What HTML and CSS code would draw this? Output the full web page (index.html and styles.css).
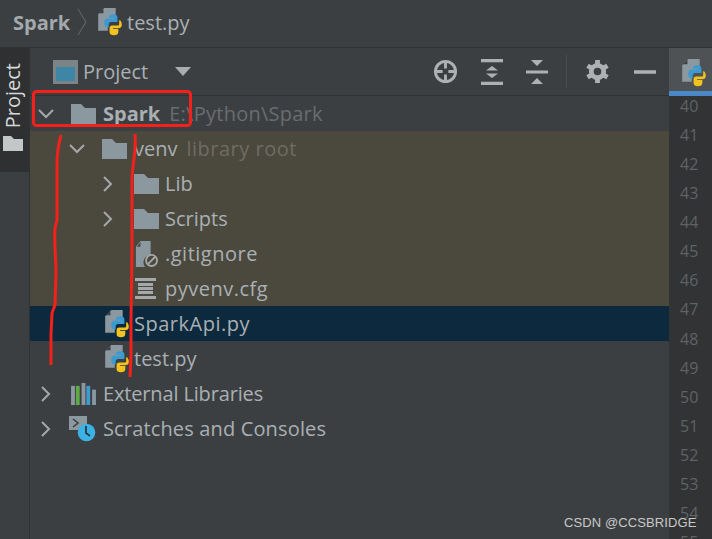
FILE: index.html
```html
<!DOCTYPE html>
<html lang="en">
<head>
<meta charset="utf-8">
<title>Spark</title>
<link rel="stylesheet" href="styles.css">
</head>
<body>
<svg width="0" height="0" class="defs">
  <defs>
    <symbol id="folder" viewBox="0 0 25 20"><path d="M0 0h10l4 4h11v16H0z" fill="#8c989f"/></symbol>
    <symbol id="chev-d" viewBox="0 0 16 16"><path d="M1 4l7 7 7-7" fill="none" stroke="#a4a8aa" stroke-width="2"/></symbol>
    <symbol id="chev-r" viewBox="0 0 16 16"><path d="M4 1l7 7-7 7" fill="none" stroke="#a4a8aa" stroke-width="2"/></symbol>
    <symbol id="py" viewBox="0 0 27 32">
      <path d="M7 0h13v13H11v13H0V7z" fill="#8c989f"/>
      <path d="M6 1v5H1z" fill="#3c3f41"/>
      <path d="M12 11c0-3 2-4 5-4s5 1 5 4v5h-7c-2 0-3 1-3 3v3h-2c-2 0-3-2-3-5s1-5 4-5h7v-1h-6z" fill="#3c9ad0"/>
      <path d="M24 14h1c1 1 2 3 2 5 0 3-2 4-4 4h-6v1h6v3c0 3-2 4-5 4s-5-1-5-4v-4c0-2 1-3 3-3h6c2 0 2-1 2-3z" fill="#f2c21f"/>
    </symbol>
  </defs>
</svg>
<div class="app">
  <header class="crumbs">
    <span class="crumb-root">Spark</span>
    <svg class="crumb-sep" width="10" height="28" viewBox="0 0 10 28"><path d="M1 1l8 13-8 13" fill="none" stroke="#5d6163" stroke-width="1.2"/></svg>
    <svg class="icon-py" width="24" height="28"><use href="#py"/></svg>
    <span class="crumb-file">test.py</span>
  </header>
  <div class="main">
    <aside class="stripe">
      <div class="stripe-tab">
        <span class="stripe-label">Project</span>
        <svg class="stripe-icon" width="20" height="15" viewBox="0 0 20 15"><path d="M0 0h8l3 3h9v12H0z" fill="#c4c7c8"/></svg>
      </div>
    </aside>
    <section class="panel">
      <div class="toolbar">
        <svg class="view-icon" width="25" height="24" viewBox="0 0 25 24"><rect x="0" y="0" width="25" height="24" fill="#7d8488"/><rect x="3" y="7" width="19" height="14" fill="#3e86a5"/></svg>
        <span class="view-name">Project</span>
        <svg class="view-caret" width="16" height="9" viewBox="0 0 16 9"><path d="M0 0h16L8 9z" fill="#a9adaf"/></svg>
        <div class="tools">
          <svg class="tool" width="25" height="25" viewBox="0 0 26 26"><circle cx="13" cy="13" r="10.5" fill="none" stroke="#aeb1b3" stroke-width="3"/><path d="M13 3v7M13 16v7M3 13h7M16 13h7" stroke="#aeb1b3" stroke-width="3"/></svg>
          <svg class="tool" width="22" height="26" viewBox="0 0 22 26"><path d="M0 1.500h22M0 24.500h22" stroke="#aeb1b3" stroke-width="3.500"/><path d="M11 7l6 4.500H5zM11 19l-6-4.500h12z" fill="#aeb1b3"/></svg>
          <svg class="tool" width="22" height="26" viewBox="0 0 22 26"><path d="M0 13h22" stroke="#aeb1b3" stroke-width="3"/><path d="M5 1h12l-6 6zM5 25h12l-6-6z" fill="#aeb1b3"/></svg>
          <span class="tool-sep"></span>
          <svg class="tool gear" width="23" height="23" viewBox="0 0 24 24"><circle cx="12" cy="12" r="6.500" fill="none" stroke="#aeb1b3" stroke-width="5"/><path d="M12 0v5M12 19v5M1.600 6l4.300 2.500M18.100 15.500l4.300 2.500M1.600 18l4.300-2.500M18.100 8.500l4.300-2.500" stroke="#aeb1b3" stroke-width="5"/></svg>
          <svg class="tool minus" width="22" height="4" viewBox="0 0 22 4"><path d="M0 2h22" stroke="#aeb1b3" stroke-width="3.500"/></svg>
        </div>
      </div>
      <ul class="tree">
        <li class="row">
          <svg class="chev" width="16" height="16"><use href="#chev-d"/></svg>
          <svg class="ic-folder" width="25" height="20"><use href="#folder"/></svg>
          <span class="name strong">Spark</span><span class="hint slight-wide">E:\Python\Spark</span>
        </li>
        <li class="row lib l1">
          <svg class="chev" width="16" height="16"><use href="#chev-d"/></svg>
          <svg class="ic-folder" width="25" height="20"><use href="#folder"/></svg>
          <span class="name">venv</span><span class="hint wide">library root</span>
        </li>
        <li class="row lib l2">
          <svg class="chev" width="16" height="16"><use href="#chev-r"/></svg>
          <svg class="ic-folder" width="25" height="20"><use href="#folder"/></svg>
          <span class="name">Lib</span>
        </li>
        <li class="row lib l2">
          <svg class="chev" width="16" height="16"><use href="#chev-r"/></svg>
          <svg class="ic-folder" width="25" height="20"><use href="#folder"/></svg>
          <span class="name">Scripts</span>
        </li>
        <li class="row lib l3">
          <svg class="ic-file" width="23" height="26" viewBox="0 0 25 28"><path d="M6 0h11v15a8 8 0 0 0-6 13H1V6z" fill="#8c989f"/><path d="M6 1v5H2z" fill="#4b483e"/><circle cx="18" cy="21" r="6" fill="none" stroke="#a4a8aa" stroke-width="2"/><path d="M14 25l8-8" stroke="#a4a8aa" stroke-width="2"/></svg>
          <span class="name wide">.gitignore</span>
        </li>
        <li class="row lib l3">
          <svg class="ic-file" width="23" height="21" viewBox="0 0 23 21"><path d="M0 1.500h21M3 6.500h15M3 10.500h15M3 14.500h15M0 19.500h21" stroke="#a4a8aa" stroke-width="3"/></svg>
          <span class="name wide">pyvenv.cfg</span>
        </li>
        <li class="row selected l4">
          <svg class="icon-py" width="24" height="28"><use href="#py"/></svg>
          <span class="name wide">SparkApi.py</span>
        </li>
        <li class="row l4">
          <svg class="icon-py" width="24" height="28"><use href="#py"/></svg>
          <span class="name">test.py</span>
        </li>
        <li class="row">
          <svg class="chev" width="16" height="16"><use href="#chev-r"/></svg>
          <svg class="ic-libs" width="25" height="22" viewBox="0 0 26 23"><rect x="0" y="3" width="4" height="20" fill="#8c989f"/><rect x="5" y="3" width="4" height="20" fill="#5cab44"/><rect x="11" y="0" width="4" height="23" fill="#8c989f"/><rect x="16" y="3" width="4" height="20" fill="#3e9bcf"/><rect x="22" y="7" width="4" height="16" fill="#8c989f"/></svg>
          <span class="name narrow">External Libraries</span>
        </li>
        <li class="row">
          <svg class="chev" width="16" height="16"><use href="#chev-r"/></svg>
          <svg class="ic-libs scratch" width="27" height="27" viewBox="0 0 27 27"><path d="M0 1h18v14H0z" fill="#8c989f"/><path d="M4 4l5 4-5 4" fill="none" stroke="#3c3f41" stroke-width="1.600"/><circle cx="17.500" cy="17.500" r="8.800" fill="#3bb2e6"/><path d="M17 11v7l4 3" fill="none" stroke="#2b3a42" stroke-width="1.800"/></svg>
          <span class="name slight">Scratches and Consoles</span>
        </li>
      </ul>
    </section>
    <section class="editor">
      <div class="tab"><svg class="icon-py" width="24" height="28"><use href="#py"/></svg></div>
      <ol class="gutter">
        <li>40</li><li>41</li><li>42</li><li>43</li><li>44</li><li>45</li><li>46</li><li>47</li><li>48</li><li>49</li><li>50</li><li>51</li><li>52</li><li>53</li><li>54</li><li>55</li>
      </ol>
    </section>
  </div>
</div>
<svg class="marks" width="712" height="539" viewBox="0 0 712 539">
  <rect x="33.500" y="91.500" width="157" height="34" rx="3" fill="none" stroke="#f4201a" stroke-width="3"/>
  <path d="M61 135c-2 8-4 14-4 30v55l-2 8c-1 15 1 30 1 45l-1 32-3 8-1 22v30" fill="none" stroke="#f4201a" stroke-width="3"/>
  <path d="M135 134c1 10 0 16-1 25-1 8-2 12-2 22v70l-1 70v35l-1 21" fill="none" stroke="#f4201a" stroke-width="3"/>
</svg>
<div class="credit">CSDN @CCSBRIDGE</div>
</body>
</html>
```
FILE: styles.css
```css
* { box-sizing: border-box; }
html, body { margin: 0; padding: 0; }
body {
  width: 712px;
  height: 539px;
  overflow: hidden;
  background: #3c3f41;
  font-family: "Open Sans", "Noto Sans", sans-serif;
  color: #a9b0b4;
  position: relative;
}
.defs { position: absolute; }
.app { width: 712px; height: 539px; display: flex; flex-direction: column; }
.crumbs {
  height: 48px;
  flex: none;
  display: flex;
  align-items: center;
  padding-left: 13px;
  padding-bottom: 3px;
  border-bottom: 1px solid #323232;
  font-size: 20px;
}
.crumb-root { font-weight: 700; color: #a3a9ad; width: 58px; }
.crumb-sep { margin-left: 6px; margin-right: 11px; }
.crumb-file { margin-left: 5px; color: #a9b0b4; }
.main { flex: 1; display: flex; min-height: 0; }
.stripe {
  width: 30px;
  flex: none;
  border-right: 1px solid #323232;
}
.stripe-tab {
  height: 124px;
  background: #2e3032;
  display: flex;
  flex-direction: column;
  align-items: center;
  padding-top: 15px;
  padding-right: 4px;
  gap: 8px;
}
.stripe-label {
  writing-mode: vertical-rl;
  transform: rotate(180deg);
  font-size: 20px;
  line-height: 22px;
  color: #d5d8d9;
}
.panel { width: 639px; flex: none; display: flex; flex-direction: column; }
.toolbar {
  height: 48px;
  flex: none;
  display: flex;
  align-items: center;
  padding-left: 23px;
  padding-right: 13px;
  border-bottom: 1px solid #323232;
  font-size: 20px;
}
.view-name { margin-left: 5px; color: #a9b0b4; }
.view-caret { margin-left: 27px; }
.tools { margin-left: auto; display: flex; align-items: center; }
.tool { flex: none; margin-left: 23px; }
.tool:first-child { margin-left: 0; }
.tool-sep { width: 1px; height: 33px; background: #4b4e50; margin-left: 18px; }
.tool.gear { margin-left: 19px; }
.tool.minus { margin-left: 25px; }
.tree { list-style: none; margin: 0; padding: 0; font-size: 20px; }
.row {
  height: 35px;
  display: flex;
  align-items: center;
  padding-left: 8px;
  white-space: nowrap;
}
.row .chev { flex: none; }
.row .ic-folder { flex: none; margin-left: 17px; }
.row .ic-libs { flex: none; margin-left: 17px; }
.row .ic-libs.scratch { margin-left: 15px; }
.row .name { margin-left: 7px; }
.row .ic-libs + .name { margin-left: 7px; }
.row .ic-libs.scratch + .name { margin-left: 7px; }
.name.strong { font-weight: 700; }
.wide { letter-spacing: 0.500px; }
.narrow { letter-spacing: -0.150px; }
.slight { letter-spacing: 0.150px; }
.slight-wide { letter-spacing: 0.250px; }
.hint { margin-left: 9px; color: #696d70; }
.lib { background: #4b483e; }
.lib .hint { color: #6f6c62; }
.l1 { padding-left: 39px; }
.l1 .name { margin-left: 7px; }
.l2 { padding-left: 70px; }
.l2 .ic-folder { margin-left: 18px; }
.l2 .name { margin-left: 6px; }
.l3 { padding-left: 105px; }
.l3 .ic-file { flex: none; }
.l3 .name { margin-left: 7px; }
.l4 { padding-left: 75px; }
.l4 .name { margin-left: 5px; }
.selected { background: #0d293e; }
.editor { flex: 1; min-width: 0; display: flex; flex-direction: column; background: #313335; overflow: hidden; }
.tab {
  height: 48px;
  flex: none;
  background: #4e5254;
  border-bottom: 5px solid #4a88c7;
  padding: 6px 0 0 13px;
  display: flex;
  align-items: center;
}
.gutter {
  list-style: none;
  margin: 0;
  padding: 0 0 0 11px;
  font-size: 16px;
  color: #5e6366;
}
.gutter li { height: 29.070px; line-height: 21px; }
.marks { position: absolute; left: 0; top: 0; pointer-events: none; }
.credit {
  position: absolute;
  left: 564px;
  top: 515px;
  font-family: "Liberation Sans", sans-serif;
  font-size: 13px;
  letter-spacing: 0.100px;
  color: #c8c8c8;
}
```
